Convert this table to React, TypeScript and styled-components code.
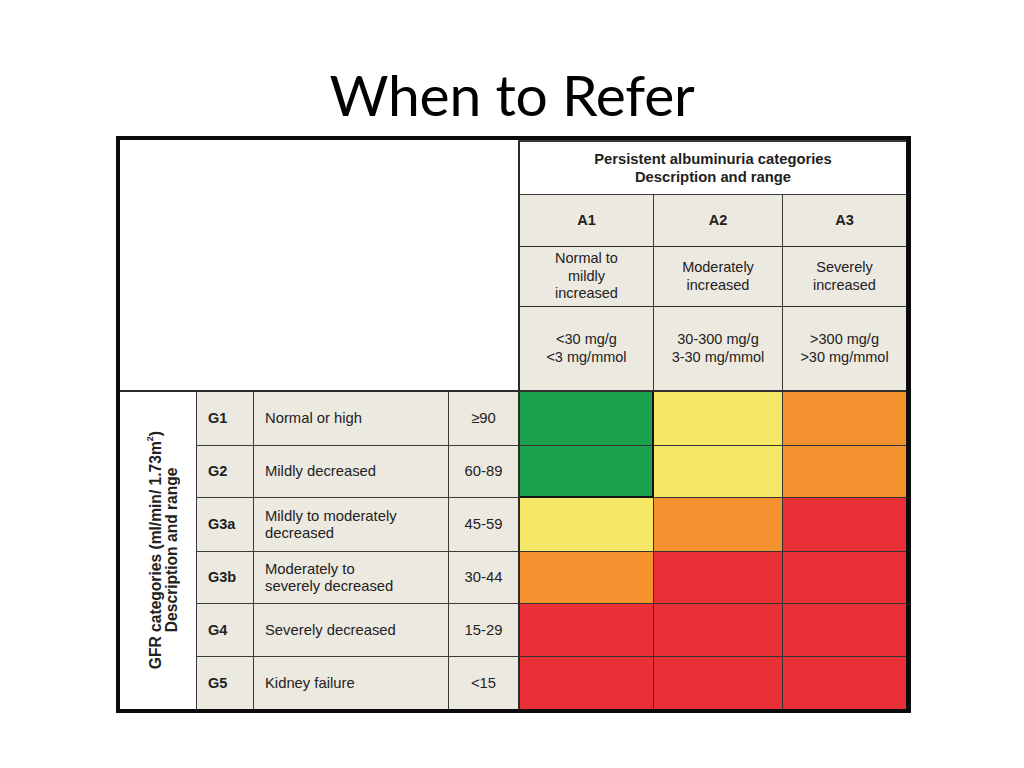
import React from "react";
import styled, { createGlobalStyle } from "styled-components";

const Global = createGlobalStyle`
  html, body { margin: 0; padding: 0; background: #ffffff; }
  body { font-family: "Liberation Sans", Arial, sans-serif; }
`;

const Page = styled.div`
  width: 1024px;
  height: 768px;
  display: flex;
  flex-direction: column;
  align-items: flex-start;
  box-sizing: border-box;
`;

const Title = styled.h1`
  align-self: center;
  margin: 62px 0 0 0;
  height: 74px;
  line-height: 64px;
  font-family: Lato, "Open Sans", sans-serif;
  font-weight: 400;
  font-size: 57px;
  color: #000;
  letter-spacing: -0.2px;
`;

const Table = styled.div`
  margin-left: 116px;
  display: grid;
  grid-template-columns: 77px 57px 195px 71px 134px 129px 123px;
  grid-template-rows: 55px 52px 60px 85px 54px 52px 54px 52px 53px 52px;
  border: 4px solid #0b0b0b;
  border-right-width: 5px;
  background: #ffffff;
`;

const Blank = styled.div`
  grid-column: 1 / 5;
  grid-row: 1 / 5;
  background: #ffffff;
  border-right: 2px solid #2b2b2b;
  border-bottom: 2px solid #2b2b2b;
`;

const Header = styled.div`
  grid-column: 5 / 8;
  grid-row: 1;
  background: #ffffff;
  border-top: 2px solid #3a3a3a;
  border-bottom: 1px solid #3a3a3a;
  display: flex;
  align-items: center;
  justify-content: center;
  text-align: center;
  font-weight: 700;
  font-size: 14.8px;
  line-height: 18px;
  color: #1f1f1f;
`;

const HeadCell = styled.div<{ $bold?: boolean; $last?: boolean; $bottom?: number }>`
  background: #ece9e1;
  border-right: ${(p) => (p.$last ? "0" : "1px solid #3a3a3a")};
  border-bottom: ${(p) => p.$bottom ?? 1}px solid #2e2e2e;
  display: flex;
  align-items: center;
  justify-content: center;
  text-align: center;
  font-weight: ${(p) => (p.$bold ? 700 : 400)};
  font-size: ${(p) => (p.$bold ? "14.5px" : "14.5px")};
  line-height: 17.5px;
  color: #222;
`;

const SideLabel = styled.div`
  grid-column: 1;
  grid-row: 5 / 11;
  background: #ffffff;
  border-right: 1px solid #3a3a3a;
  display: flex;
  align-items: center;
  justify-content: center;
  padding-left: 12px;
`;

const SideText = styled.div`
  writing-mode: vertical-rl;
  transform: rotate(180deg);
  text-align: center;
  font-weight: 700;
  font-size: 15.6px;
  line-height: 16px;
  color: #222;
  sup {
    font-size: 9px;
    line-height: 0;
  }
`;

const RowCell = styled.div<{ $align?: "left" | "center"; $bold?: boolean; $last?: boolean }>`
  background: #ece9e1;
  border-right: 1px solid #3a3a3a;
  border-bottom: ${(p) => (p.$last ? "0" : "1px solid #3a3a3a")};
  display: flex;
  align-items: center;
  justify-content: ${(p) => (p.$align === "center" ? "center" : "flex-start")};
  padding-left: ${(p) => (p.$align === "center" ? "0" : "11px")};
  font-weight: ${(p) => (p.$bold ? 700 : 400)};
  font-size: ${(p) => (p.$bold ? "14.5px" : "14.8px")};
  line-height: 17px;
  color: #222;
`;

const RangeCell = styled(RowCell)`
  border-right: 2px solid #2b2b2b;
`;

const colors: Record<string, string> = {
  g: "#1aa24e",
  y: "#f5e866",
  o: "#f3922f",
  r: "#e83036",
};

const Risk = styled.div<{ $c: string; $lastRow?: boolean; $lastCol?: boolean; $boxRight?: boolean; $boxBottom?: boolean }>`
  background: ${(p) => colors[p.$c]};
  border-right: ${(p) =>
    p.$lastCol ? "0" : p.$boxRight ? "2px solid #141414" : "1px solid #333"};
  border-bottom: ${(p) =>
    p.$lastRow ? "0" : p.$boxBottom ? "2px solid #141414" : "1px solid #333"};
`;

const rows = [
  { g: "G1", d: ["Normal or high"], r: "≥90", c: ["g", "y", "o"] },
  { g: "G2", d: ["Mildly decreased"], r: "60-89", c: ["g", "y", "o"] },
  { g: "G3a", d: ["Mildly to moderately", "decreased"], r: "45-59", c: ["y", "o", "r"] },
  { g: "G3b", d: ["Moderately to", "severely decreased"], r: "30-44", c: ["o", "r", "r"] },
  { g: "G4", d: ["Severely decreased"], r: "15-29", c: ["r", "r", "r"] },
  { g: "G5", d: ["Kidney failure"], r: "<15", c: ["r", "r", "r"] },
];

const cats = [
  { a: "A1", d: ["Normal to", "mildly", "increased"], r: ["<30 mg/g", "<3 mg/mmol"] },
  { a: "A2", d: ["Moderately", "increased"], r: ["30-300 mg/g", "3-30 mg/mmol"] },
  { a: "A3", d: ["Severely", "increased"], r: [">300 mg/g", ">30 mg/mmol"] },
];

const Lines = ({ lines }: { lines: string[] }) => (
  <div>
    {lines.map((l, i) => (
      <div key={i}>{l}</div>
    ))}
  </div>
);

export default function App() {
  return (
    <>
      <Global />
      <Page>
        <Title>When to Refer</Title>
        <Table>
          <Blank />
          <Header>
            <Lines lines={["Persistent albuminuria categories", "Description and range"]} />
          </Header>
          {cats.map((c, i) => (
            <HeadCell key={c.a} $bold $last={i === 2} style={{ gridRow: 2, gridColumn: 5 + i }}>
              {c.a}
            </HeadCell>
          ))}
          {cats.map((c, i) => (
            <HeadCell key={c.a + "d"} $last={i === 2} style={{ gridRow: 3, gridColumn: 5 + i }}>
              <Lines lines={c.d} />
            </HeadCell>
          ))}
          {cats.map((c, i) => (
            <HeadCell key={c.a + "r"} $last={i === 2} $bottom={2} style={{ gridRow: 4, gridColumn: 5 + i }}>
              <Lines lines={c.r} />
            </HeadCell>
          ))}
          <SideLabel>
            <SideText>
              <div>
                GFR categories (ml/min/ 1.73m<sup>2</sup>)
              </div>
              <div>Description and range</div>
            </SideText>
          </SideLabel>
          {rows.map((r, ri) => {
            const last = ri === rows.length - 1;
            return (
              <React.Fragment key={r.g}>
                <RowCell $bold $last={last}>{r.g}</RowCell>
                <RowCell $last={last}>
                  <Lines lines={r.d} />
                </RowCell>
                <RangeCell $align="center" $last={last}>{r.r}</RangeCell>
                {r.c.map((c, ci) => (
                  <Risk
                    key={ci}
                    $c={c}
                    $lastRow={last}
                    $lastCol={ci === 2}
                    $boxRight={ci === 0 && ri < 2}
                    $boxBottom={ci === 0 && ri === 1}
                  />
                ))}
              </React.Fragment>
            );
          })}
        </Table>
      </Page>
    </>
  );
}
